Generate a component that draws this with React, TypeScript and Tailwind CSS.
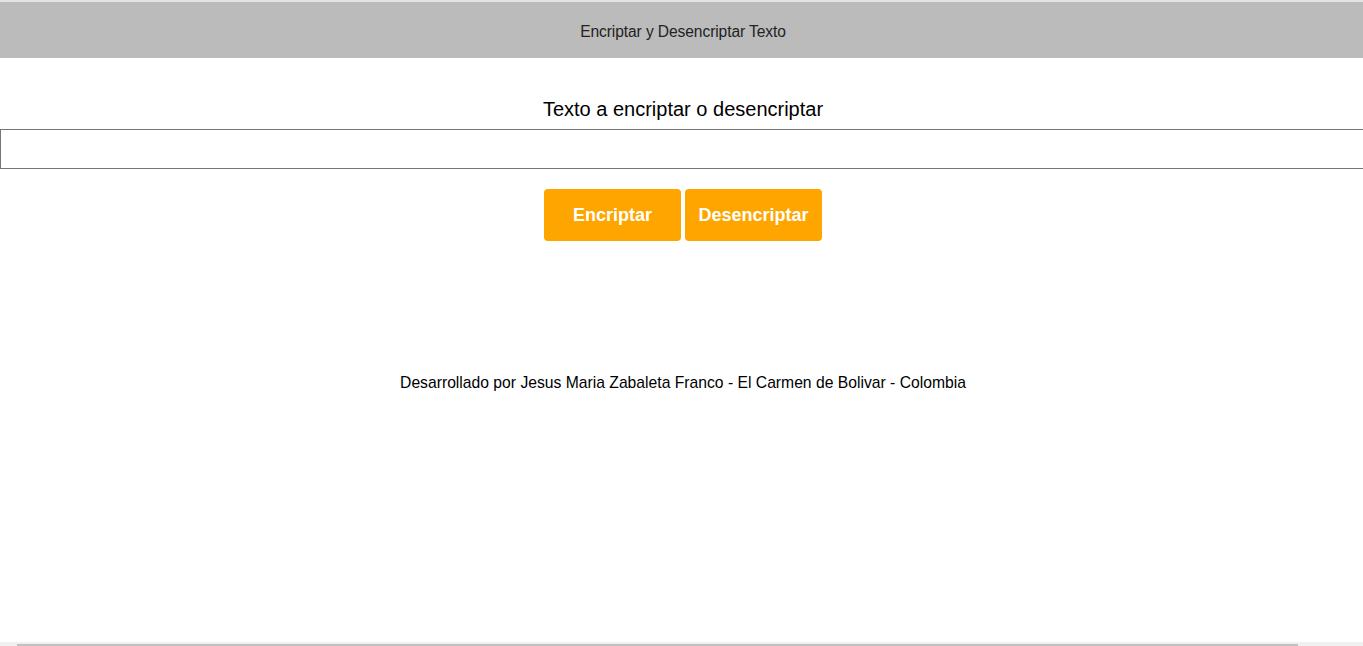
import { useState } from 'react'

const encriptar = (texto: string) =>
  texto
    .replace(/e/g, 'enter')
    .replace(/i/g, 'imes')
    .replace(/a/g, 'ai')
    .replace(/o/g, 'ober')
    .replace(/u/g, 'ufat')

const desencriptar = (texto: string) =>
  texto
    .replace(/enter/g, 'e')
    .replace(/imes/g, 'i')
    .replace(/ai/g, 'a')
    .replace(/ober/g, 'o')
    .replace(/ufat/g, 'u')

const App = () => {
  const [texto, setTexto] = useState('')

  return (
    <div className="h-[646px] flex flex-col bg-white overflow-hidden font-['Liberation_Sans',Arial,sans-serif] text-black">
      {/* Header */}
      <div className="h-[2px] bg-[#e3e3e3]" />
      <header className="h-[56px] bg-[#bbbbbb] flex items-center justify-center pt-[3px] pl-[3px]">
        <h1 className="text-[15.6px] text-[#222] tracking-[-0.1px]">Encriptar y Desencriptar Texto</h1>
      </header>

      {/* Form */}
      <main className="flex flex-col items-center pt-[39px] pl-[3px]">
        <label htmlFor="texto" className="text-[20px] leading-[24px]">
          Texto a encriptar o desencriptar
        </label>
        <input
          id="texto"
          value={texto}
          onChange={(e) => setTexto(e.target.value)}
          className="mt-[8px] self-start -ml-[3px] w-[1400px] h-[40px] border border-[#767676] outline-none px-2 text-base"
        />
        <div className="flex gap-[4px] mt-[20px]">
          <button
            onClick={() => setTexto(encriptar(texto))}
            className="w-[137px] h-[52px] bg-[#ffa500] rounded-[4px] text-white font-bold text-[18px]"
          >
            Encriptar
          </button>
          <button
            onClick={() => setTexto(desencriptar(texto))}
            className="w-[137px] h-[52px] bg-[#ffa500] rounded-[4px] text-white font-bold text-[18px]"
          >
            Desencriptar
          </button>
        </div>

        <footer className="mt-[133px] text-[15.7px] leading-[18px]">
          Desarrollado por Jesus Maria Zabaleta Franco - El Carmen de Bolivar - Colombia
        </footer>
      </main>

      <div className="flex-1" />

      {/* Horizontal scrollbar */}
      <div className="h-[4px] bg-[#f0f0f0] flex items-end pl-[17px] pr-[65px]">
        <div className="h-[2px] w-full bg-[#c1c1c1]" />
      </div>
    </div>
  )
}

export default App
